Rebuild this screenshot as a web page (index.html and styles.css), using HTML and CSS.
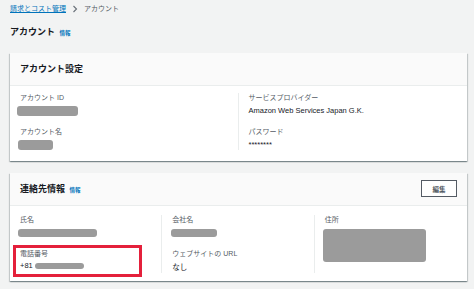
FILE: index.html
```html
<!DOCTYPE html>
<html lang="ja">
<head>
    <meta charset="UTF-8">
    <title>アカウント</title>
    <link rel="stylesheet" href="styles.css">
</head>
<body>
    <div class="page">
        <div class="breadcrumb">
            <a href="#">請求とコスト管理</a>
            <svg class="chevron" width="6" height="8" viewBox="0 0 6 8"><polyline points="1.5,1 4.5,4 1.5,7" fill="none" stroke="#687078" stroke-width="1.1"/></svg>
            <span>アカウント</span>
        </div>

        <h1 class="page-title">アカウント <a class="info" href="#">情報</a></h1>

        <div class="card">
            <div class="card-header">
                <h2>アカウント設定</h2>
            </div>
            <div class="card-body cols-2">
                <div class="col">
                    <div class="field">
                        <div class="label">アカウント ID</div>
                        <div class="value"><span class="redact redact-id"></span></div>
                    </div>
                    <div class="field">
                        <div class="label">アカウント名</div>
                        <div class="value"><span class="redact redact-name"></span></div>
                    </div>
                </div>
                <div class="col">
                    <div class="field">
                        <div class="label">サービスプロバイダー</div>
                        <div class="value">Amazon Web Services Japan G.K.</div>
                    </div>
                    <div class="field">
                        <div class="label">パスワード</div>
                        <div class="value">********</div>
                    </div>
                </div>
            </div>
        </div>

        <div class="card">
            <div class="card-header">
                <h2>連絡先情報 <a class="info" href="#">情報</a></h2>
                <button class="btn">編集</button>
            </div>
            <div class="card-body cols-3">
                <div class="col">
                    <div class="field">
                        <div class="label">氏名</div>
                        <div class="value"><span class="redact redact-full"></span></div>
                    </div>
                    <div class="field marked">
                        <div class="label">電話番号</div>
                        <div class="value">+81 <span class="redact redact-tel"></span></div>
                    </div>
                </div>
                <div class="col">
                    <div class="field">
                        <div class="label">会社名</div>
                        <div class="value"><span class="redact redact-company"></span></div>
                    </div>
                    <div class="field">
                        <div class="label">ウェブサイトの URL</div>
                        <div class="value">なし</div>
                    </div>
                </div>
                <div class="col">
                    <div class="field">
                        <div class="label">住所</div>
                        <div class="value"><span class="redact redact-address"></span></div>
                    </div>
                </div>
            </div>
        </div>
    </div>
</body>
</html>
```

FILE: styles.css
```css
body {
    margin: 0;
    background: #f2f3f3;
    font-family: "Liberation Sans", "Noto Sans CJK JP", sans-serif;
    color: #16191f;
}

.page {
    padding: 3px 7px 0 10px;
}

.breadcrumb {
    display: flex;
    align-items: center;
    gap: 5px;
    font-size: 7px;
    line-height: 12px;
    color: #545b64;
}

.breadcrumb a {
    color: #0073bb;
    text-decoration: underline;
}

.chevron {
    margin: 0 1px;
}

.page-title {
    margin: 10px 0 13px;
    font-size: 9px;
    line-height: 14px;
    font-weight: bold;
}

.info {
    margin-left: 2px;
    font-size: 5.5px;
    font-weight: bold;
    color: #0073bb;
    text-decoration: none;
    vertical-align: middle;
}

.card {
    background: white;
    margin-bottom: 12px;
    box-shadow: 0 1px 1px 0 rgba(0, 28, 36, 0.3), 1px 1px 1px 0 rgba(0, 28, 36, 0.15), -1px 1px 1px 0 rgba(0, 28, 36, 0.15);
}

.card-header {
    display: flex;
    align-items: center;
    justify-content: space-between;
    height: 32px;
    padding: 0 10px;
    background: #fafafa;
    border-bottom: 1px solid #eaeded;
}

.card-header h2 {
    margin: 0;
    font-size: 9px;
    font-weight: bold;
}

.btn {
    width: 36px;
    height: 17px;
    padding: 0;
    background: white;
    border: 1px solid #545b64;
    font-family: inherit;
    font-size: 6.5px;
    font-weight: bold;
    color: #545b64;
}

.card-body {
    display: grid;
    column-gap: 20px;
    padding: 7px 10px 11px;
}

.cols-2 {
    grid-template-columns: 1fr 1fr;
}

.cols-3 {
    grid-template-columns: 1fr 1fr 1fr;
    padding: 9px 10px 8px;
}

.col + .col {
    border-left: 1px solid #eaeded;
    margin-left: -11px;
    padding-left: 10px;
}

.field + .field {
    margin-top: 11px;
}

.cols-3 .field + .field {
    margin-top: 12px;
}

.label {
    font-size: 7px;
    line-height: 10px;
    color: #545b64;
}

.value {
    margin-top: 3px;
    font-size: 7.5px;
    line-height: 10px;
    display: flex;
    align-items: center;
    gap: 2px;
}

.cols-3 .value {
    margin-top: 4px;
}

.redact {
    display: inline-block;
    background: #9b9b9b;
    border-radius: 3px;
}

.redact-id { width: 61px; height: 10px; margin-left: -3px; }
.redact-name { width: 35px; height: 10px; margin-left: -2px; }
.redact-full { width: 79px; height: 8px; margin-left: -2px; }
.redact-tel { width: 49px; height: 6px; }
.redact-company { width: 46px; height: 8px; margin-left: -1px; }
.redact-address { width: 103px; height: 33px; margin-left: -2px; }

.cols-3 .field.marked {
    width: 115px;
    margin: 8px 0 -6px -7px;
    padding: 1px 4px 3px;
    border: 3px solid #e4203b;
}

.marked .value {
    margin-top: 2px;
}
```
